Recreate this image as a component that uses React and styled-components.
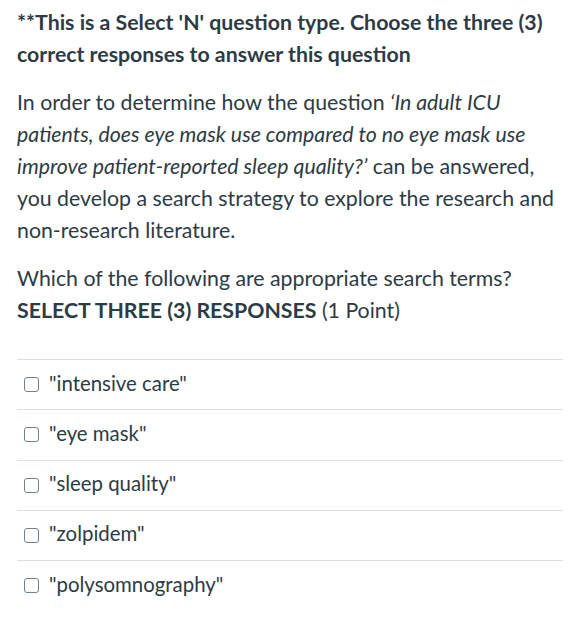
import React from 'react'
import styled, { createGlobalStyle } from 'styled-components'

const GlobalStyle = createGlobalStyle`
    html, body {
        margin: 0;
        padding: 0;
        background: #ffffff;
    }
    body {
        font-family: Lato, "Open Sans", "Liberation Sans", sans-serif;
        color: #2d3b45;
    }
`;

const QuestionWrapper = styled.div`
    width: 100%;
    box-sizing: border-box;
    padding: 6px 11px 20px 17px;
`;

const Paragraph = styled.p`
    margin: 0 0 ${props => (props.$last ? 0 : 16)}px 0;
    font-size: 21.3px;
    line-height: 32px;
    font-weight: ${props => (props.$bold ? 700 : 400)};
    em { font-style: italic; }
    strong { font-weight: 700; }
`;

const OptionList = styled.ul`
    list-style: none;
    margin: 33px 0 0 0;
    padding: 0;
`;

const OptionRow = styled.li`
    box-sizing: border-box;
    display: flex;
    align-items: center;
    height: 50.25px;
    border-top: 1px solid #dcdfe2;
    padding-left: 7px;
    gap: 10px;
`;

const CheckBox = styled.span`
    box-sizing: border-box;
    width: 15px;
    height: 15px;
    border: 1.2px solid #73818c;
    border-radius: 3px;
    background: #fff;
    flex-shrink: 0;
`;

const OptionLabel = styled.span`
    font-size: 20.4px;
    line-height: 24px;
    color: #2d3b45;
    margin-top: -4px;
`;

const options = [
    '"intensive care"',
    '"eye mask"',
    '"sleep quality"',
    '"zolpidem"',
    '"polysomnography"',
];

export default function App() {
    return (
        <QuestionWrapper>
            <GlobalStyle />
            <Paragraph $bold>
                **This is a Select 'N' question type. Choose the three (3) correct responses to answer this question
            </Paragraph>
            <Paragraph>
                In order to determine how the question <em>‘In adult ICU patients, does eye mask use compared to no eye mask use improve patient-reported sleep quality?’</em> can be answered, you develop a search strategy to explore the research and non-research literature.
            </Paragraph>
            <Paragraph $last>
                Which of the following are appropriate search terms?<br />
                <strong>SELECT THREE (3) RESPONSES</strong> (1 Point)
            </Paragraph>
            <OptionList>
                {options.map(o => (
                    <OptionRow key={o}>
                        <CheckBox />
                        <OptionLabel>{o}</OptionLabel>
                    </OptionRow>
                ))}
            </OptionList>
        </QuestionWrapper>
    )
}
